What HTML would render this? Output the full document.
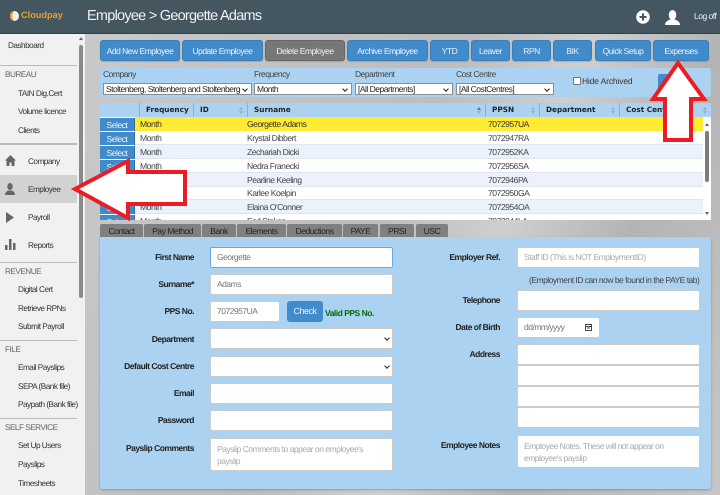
<!DOCTYPE html>
<html><head><meta charset="utf-8"><style>
html,body{margin:0;padding:0}
body{width:720px;height:495px;overflow:hidden;position:relative;background:#c4c4c4;font-family:"Liberation Sans",sans-serif;font-size:8.5px;letter-spacing:-.5px;color:#333;text-rendering:geometricPrecision}
div,span,b{position:absolute;white-space:nowrap;box-sizing:border-box}
.bg{left:85px;top:34px;width:635px;height:461px;background:linear-gradient(115deg,#c9c9c9 0%,#bdbdbd 45%,#cfcfcf 60%,#b4b4b4 75%,#c6c6c6 100%)}
.side{left:0;top:34px;width:77px;height:461px;background:#f1f1f1}
.hr{left:0;width:77px;height:1px;background:#bbb}
.n{left:18px;font-size:8.2px;color:#333;line-height:10px}
.h{left:5px;font-size:8.2px;color:#666;line-height:10px}
.m{left:28px;font-size:8.2px;color:#333;line-height:10px}
.btn{top:40px;height:21px;background:#428bca;border:1px solid #3b7fb9;border-radius:3px;color:#eaf3fb;text-align:center;line-height:20px;font-size:8.5px;box-shadow:0 1px 1px rgba(0,0,0,.15)}
.lab{top:69px;font-size:8.5px;color:#444;line-height:10px}
.sel{top:83px;height:12px;background:#fff;border:1px solid #8d8d8d;font-size:8.5px;line-height:10px;padding-left:2px;color:#222;overflow:hidden}
.sel:after,.fs:after{content:"";position:absolute;right:4px;top:3px;width:3px;height:3px;border-right:1.2px solid #222;border-bottom:1.2px solid #222;transform:rotate(45deg)}
.th{top:103px;height:14px;background:#abd2f0;font:bold 7.3px/14px "DejaVu Sans",sans-serif;letter-spacing:0;color:#222;padding-left:6px;border-right:1px solid #8fb0cc}
.th i{position:absolute;right:4px;top:4px;width:0;height:0;border-left:2px solid transparent;border-right:2px solid transparent;border-bottom:3px solid #8fb0cc}
.th i:after{content:"";position:absolute;left:-2px;top:4px;width:0;height:0;border-left:2px solid transparent;border-right:2px solid transparent;border-top:3px solid #8fb0cc}
.row{left:135px;width:568px;height:14px;line-height:15px;font-size:8.6px;color:#444;border-bottom:1px solid #dde5ee;overflow:hidden}
.row span{top:0}
.sb{left:100px;width:35px;height:13px;background:#428bca;border-right:1px solid #2f6ea5;color:#eaf3fb;text-align:center;line-height:14px;font-size:8.6px;overflow:hidden}
.tab{top:224px;height:13px;background:#808080;border-radius:2px 2px 0 0;color:#222;text-align:center;line-height:14px;font-size:8.6px}
.fl{font-weight:bold;font-size:8.5px;color:#222;line-height:10px;text-align:right;width:100px}
.in{background:#fff;border:1px solid #ccc;border-radius:2px;font-size:8.5px;line-height:19px;color:#777;padding:0 6px;height:21px}
.ta{line-height:12px;padding:4px 6px 0;white-space:normal}
.ph{color:#aaa}
.fs:after{right:3px;top:7px}
</style></head><body>
<div class="bg"></div>
<div style="left:0;top:0;width:720px;height:34px;background:#44565f;border-bottom:1px solid #333d43"></div>
<svg style="position:absolute;left:9px;top:10px" width="11" height="12"><ellipse cx="5.500" cy="6" rx="4.500" ry="5" fill="#f5f0e6"/><path d="M5 1.200C2 1.500 1 4 1 6s1 4.300 4 4.800C3 9 2.700 3.500 5 1.200z" fill="#e8a33a"/></svg>
<span style="left:21px;top:9px;font-weight:bold;font-size:9.200px;letter-spacing:0;line-height:13px;color:#e8a02c">Cloudpay</span>
<span style="left:87px;top:7px;font-size:14.500px;letter-spacing:-.75px;line-height:18px;color:#f0f3f4">Employee &gt; Georgette Adams</span>
<svg style="position:absolute;left:636px;top:10px" width="15" height="15"><circle cx="7" cy="7" r="6.800" fill="#fff"/><path d="M7 3.500v7M3.500 7h7" stroke="#44565f" stroke-width="2"/></svg>
<svg style="position:absolute;left:665px;top:10px" width="15" height="16"><ellipse cx="7.500" cy="5" rx="3.800" ry="5" fill="#fff"/><path d="M0 15c0-3.500 3-4.500 5-5.500h5c2 1 5 2 5 5.500z" fill="#fff"/></svg>
<span style="left:694px;top:11px;color:#eef;font-size:8.500px;line-height:10px">Log off</span>

<div class="side"></div>
<div style="left:77px;top:34px;width:8px;height:461px;background:#f1f1f1"></div>
<div style="left:79px;top:45px;width:4px;height:253px;background:#8a8a8a;border-radius:2px"></div>
<div style="left:79px;top:37px;width:0;height:0;border-left:2px solid transparent;border-right:2px solid transparent;border-bottom:3px solid #666"></div>
<span class="n" style="left:8px;top:41px">Dashboard</span>
<div class="hr" style="top:65px"></div>
<span class="h" style="top:70px">BUREAU</span>
<span class="n" style="top:89px">TAIN Dig.Cert</span>
<span class="n" style="top:107px">Volume licence</span>
<span class="n" style="top:126px">Clients</span>
<div class="hr" style="top:143px;height:2px"></div>
<svg style="position:absolute;left:5px;top:155px" width="11" height="11"><path d="M5.500 0L11 5.500H9.500V11H6.500V7.500H4.500V11H1.500V5.500H0z" fill="#666"/></svg>
<span class="m" style="top:157px">Company</span>
<div style="left:0;top:175px;width:77px;height:28px;background:#d2d2d2"></div>
<svg style="position:absolute;left:4px;top:183px" width="12" height="12"><ellipse cx="6" cy="3.500" rx="2.700" ry="3.500" fill="#666"/><path d="M1 12c0-3 2-4 3.500-4.500h3C9 8 11 9 11 12z" fill="#666"/></svg>
<span class="m" style="top:185px">Employee</span>
<svg style="position:absolute;left:6px;top:212px" width="9" height="11"><path d="M0 0L8 5.500L0 11z" fill="#666"/></svg>
<span class="m" style="top:213px">Payroll</span>
<svg style="position:absolute;left:5px;top:239px" width="11" height="11"><path d="M0 6h2.500v5H0zM4 0h2.500v11H4zM8 4h2.500v7H8z" fill="#666"/></svg>
<span class="m" style="top:241px">Reports</span>
<div class="hr" style="top:262px"></div>
<span class="h" style="top:267px">REVENUE</span>
<span class="n" style="top:285px">Digital Cert</span>
<span class="n" style="top:304px">Retrieve RPNs</span>
<span class="n" style="top:322px">Submit Payroll</span>
<div class="hr" style="top:340px"></div>
<span class="h" style="top:345px">FILE</span>
<span class="n" style="top:363px">Email Payslips</span>
<span class="n" style="top:382px">SEPA (Bank file)</span>
<span class="n" style="top:400px">Paypath (Bank file)</span>
<div class="hr" style="top:418px"></div>
<span class="h" style="top:423px">SELF SERVICE</span>
<span class="n" style="top:441px">Set Up Users</span>
<span class="n" style="top:460px">Payslips</span>
<span class="n" style="top:479px">Timesheets</span>

<div class="btn" style="left:100px;width:80px">Add New Employee</div>
<div class="btn" style="left:182px;width:81px">Update Employee</div>
<div class="btn" style="left:265px;width:80px;background:#777;border-color:#666">Delete Employee</div>
<div class="btn" style="left:347px;width:81px">Archive Employee</div>
<div class="btn" style="left:430px;width:39px">YTD</div>
<div class="btn" style="left:471px;width:39px">Leaver</div>
<div class="btn" style="left:512px;width:39px">RPN</div>
<div class="btn" style="left:553px;width:39px">BIK</div>
<div class="btn" style="left:595px;width:56px">Quick Setup</div>
<div class="btn" style="left:653px;width:56px">Expenses</div>

<div style="left:100px;top:68px;width:611px;height:29px;background:#abd2f0;border-radius:3px"></div>
<span class="lab" style="left:103px">Company</span>
<span class="lab" style="left:254px">Frequency</span>
<span class="lab" style="left:355px">Department</span>
<span class="lab" style="left:456px">Cost Centre</span>
<div class="sel" style="left:103px;width:149px">Stoltenberg, Stoltenberg and Stoltenberg</div>
<div class="sel" style="left:254px;width:98px">Month</div>
<div class="sel" style="left:355px;width:98px">[All Departments]</div>
<div class="sel" style="left:456px;width:98px">[All CostCentres]</div>
<div style="left:573px;top:77px;width:8px;height:8px;background:#fff;border:1px solid #777;border-radius:1px"></div>
<span style="left:582px;top:76px;font-size:8.500px;letter-spacing:-.15px;line-height:10px;color:#333">Hide Archived</span>
<div style="left:658px;top:74px;width:30px;height:18px;background:#428bca;border-radius:2px"></div>

<div style="left:100px;top:103px;width:611px;height:14px;background:#abd2f0"></div>
<div class="th" style="left:100px;width:40px;padding:0"></div>
<div class="th" style="left:140px;width:54px">Frequency</div>
<div class="th" style="left:194px;width:54px">ID<i></i></div>
<div class="th" style="left:248px;width:238px">Surname<i style="border-bottom-color:#5a6fc0"></i></div>
<div class="th" style="left:486px;width:54px">PPSN<i></i></div>
<div class="th" style="left:540px;width:80px">Department<i></i></div>
<div class="th" style="left:620px;width:91px;border:0">Cost Centre<i></i></div>
<div style="left:100px;top:117px;width:611px;height:103px;background:#fff;overflow:hidden"></div>
<div style="left:135px;top:117px;width:568px;height:14px;background:#ffeb33"></div>
<div class="row" style="top:117px;border:0;color:#333"><span style="left:5px">Month</span><span style="left:112px">Georgette Adams</span><span style="left:353px">7072957UA</span></div>
<div class="row" style="top:131px"><span style="left:5px">Month</span><span style="left:112px">Krystal Dibbert</span><span style="left:353px">7072947RA</span></div>
<div class="row" style="top:145px;background:#ebf2fb"><span style="left:5px">Month</span><span style="left:112px">Zechariah Dicki</span><span style="left:353px">7072952KA</span></div>
<div class="row" style="top:159px"><span style="left:5px">Month</span><span style="left:112px">Nedra Franecki</span><span style="left:353px">7072956SA</span></div>
<div class="row" style="top:173px;background:#ebf2fb"><span style="left:5px">Month</span><span style="left:112px">Pearline Keeling</span><span style="left:353px">7072946PA</span></div>
<div class="row" style="top:186px"><span style="left:5px">Month</span><span style="left:112px">Karlee Koelpin</span><span style="left:353px">7072950GA</span></div>
<div class="row" style="top:200px;background:#ebf2fb"><span style="left:5px">Month</span><span style="left:112px">Elaina O'Conner</span><span style="left:353px">7072954OA</span></div>
<div class="row" style="top:214px;height:6px;border:0"><span style="left:5px">Month</span><span style="left:112px">Earl Stokes</span><span style="left:353px">7072944LA</span></div>
<div class="sb" style="top:118px">Select</div>
<div class="sb" style="top:132px">Select</div>
<div class="sb" style="top:146px">Select</div>
<div class="sb" style="top:160px">Select</div>
<div class="sb" style="top:174px">Select</div>
<div class="sb" style="top:187px">Select</div>
<div class="sb" style="top:201px">Select</div>
<div class="sb" style="top:215px;height:5px">Select</div>
<div style="left:705px;top:131px;width:4px;height:51px;background:#7c7c7c;border-radius:2px"></div>
<div style="left:705px;top:212px;width:0;height:0;border-left:2.500px solid transparent;border-right:2.500px solid transparent;border-top:3px solid #666"></div>
<div style="left:705px;top:123px;width:0;height:0;border-left:2.500px solid transparent;border-right:2.500px solid transparent;border-bottom:3px solid #666"></div>

<div class="tab" style="left:100px;width:43px">Contact</div>
<div class="tab" style="left:144px;width:57px">Pay Method</div>
<div class="tab" style="left:202px;width:34px">Bank</div>
<div class="tab" style="left:237px;width:49px">Elements</div>
<div class="tab" style="left:287px;width:55px">Deductions</div>
<div class="tab" style="left:343px;width:35px">PAYE</div>
<div class="tab" style="left:380px;width:34px">PRSI</div>
<div class="tab" style="left:416px;width:32px">USC</div>

<div style="left:100px;top:237px;width:611px;height:252px;background:#abd2f0;border-radius:0 3px 3px 3px;box-shadow:0 1px 2px rgba(0,0,0,.25)"></div>
<div class="fl" style="left:94px;top:252px">First Name</div>
<div class="fl" style="left:94px;top:279px">Surname*</div>
<div class="fl" style="left:94px;top:306px">PPS No.</div>
<div class="fl" style="left:94px;top:334px">Department</div>
<div class="fl" style="left:94px;top:361px">Default Cost Centre</div>
<div class="fl" style="left:94px;top:388px">Email</div>
<div class="fl" style="left:94px;top:415px">Password</div>
<div class="fl" style="left:94px;top:443px">Payslip Comments</div>
<div class="in" style="left:210px;top:247px;width:183px;border-color:#6aa9e0">Georgette</div>
<div class="in" style="left:210px;top:274px;width:183px">Adams</div>
<div class="in" style="left:210px;top:301px;width:70px">7072957UA</div>
<div style="left:287px;top:301px;width:36px;height:21px;background:#428bca;border-radius:3px;color:#eaf3fb;text-align:center;line-height:20px;font-size:9px">Check</div>
<span style="left:325px;top:308px;color:#0a6a0a;font-weight:bold;font-size:8.500px;line-height:10px">Valid PPS No.</span>
<div class="in fs" style="left:210px;top:328px;width:183px"></div>
<div class="in fs" style="left:210px;top:356px;width:183px"></div>
<div class="in" style="left:210px;top:383px;width:183px"></div>
<div class="in" style="left:210px;top:410px;width:183px"></div>
<div class="in ph ta" style="left:210px;top:438px;width:183px;height:33px">Payslip Comments to appear on employee's payslip</div>

<div class="fl" style="left:400px;top:252px">Employer Ref.</div>
<div class="fl" style="left:400px;top:295px">Telephone</div>
<div class="fl" style="left:400px;top:322px">Date of Birth</div>
<div class="fl" style="left:400px;top:349px">Address</div>
<div class="fl" style="left:400px;top:440px">Employee Notes</div>
<div class="in ph" style="left:517px;top:247px;width:183px">Staff ID (This is NOT EmploymentID)</div>
<span style="left:529px;top:275px;color:#444;font-size:8.500px;line-height:10px">(Employment ID can now be found in the PAYE tab)</span>
<div class="in" style="left:517px;top:290px;width:183px"></div>
<div class="in" style="left:517px;top:317px;width:83px">dd/mm/yyyy</div>
<svg style="position:absolute;left:585px;top:323px" width="8" height="8"><path d="M.5 1.500h6v6h-6zM.5 3.500h6M2 5h3" fill="none" stroke="#444"/></svg>
<div class="in" style="left:517px;top:344px;width:183px"></div>
<div class="in" style="left:517px;top:365px;width:183px"></div>
<div class="in" style="left:517px;top:386px;width:183px"></div>
<div class="in" style="left:517px;top:407px;width:183px"></div>
<div class="in ph ta" style="left:517px;top:435px;width:183px;height:33px">Employee Notes. These will not appear on employee's payslip</div>

<svg style="position:absolute;left:0;top:0" width="720" height="495">
<path d="M75 189L128 161V172H185V204H128V218z" fill="#fff" stroke="#ed1c24" stroke-width="4"/>
<path d="M678 63L704 99H691V140H665V99H653z" fill="#fff" stroke="#ed1c24" stroke-width="4"/>
</svg>
</body></html>
